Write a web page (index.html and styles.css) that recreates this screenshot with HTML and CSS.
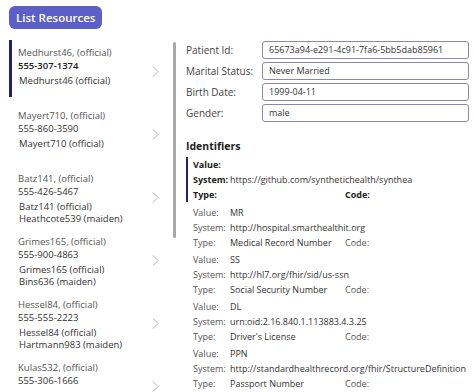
FILE: index.html
```html
<!DOCTYPE html>
<html lang="en">
<head>
    <meta charset="UTF-8">
    <title>Patients</title>
    <link rel="stylesheet" href="styles.css">
</head>
<body>
    <div class="app">
        <button class="list-btn">List Resources</button>

        <div class="main">
            <div class="list">
                <div class="item selected">
                    <div class="item-text">
                        <div class="name">Medhurst46, (official)</div>
                        <div class="phone strong">555-307-1374</div>
                        <div class="names">Medhurst46 (official)</div>
                    </div>
                    <svg class="chev" width="7" height="11" viewBox="0 0 7 11"><polyline points="1,0.5 6,5.5 1,10.5"/></svg>
                </div>
                <div class="item">
                    <div class="item-text">
                        <div class="name">Mayert710, (official)</div>
                        <div class="phone">555-860-3590</div>
                        <div class="names">Mayert710 (official)</div>
                    </div>
                    <svg class="chev" width="7" height="11" viewBox="0 0 7 11"><polyline points="1,0.5 6,5.5 1,10.5"/></svg>
                </div>
                <div class="item">
                    <div class="item-text">
                        <div class="name">Batz141, (official)</div>
                        <div class="phone">555-426-5467</div>
                        <div class="names">Batz141 (official)<br>Heathcote539 (maiden)</div>
                    </div>
                    <svg class="chev" width="7" height="11" viewBox="0 0 7 11"><polyline points="1,0.5 6,5.5 1,10.5"/></svg>
                </div>
                <div class="item">
                    <div class="item-text">
                        <div class="name">Grimes165, (official)</div>
                        <div class="phone">555-900-4863</div>
                        <div class="names">Grimes165 (official)<br>Bins636 (maiden)</div>
                    </div>
                    <svg class="chev" width="7" height="11" viewBox="0 0 7 11"><polyline points="1,0.5 6,5.5 1,10.5"/></svg>
                </div>
                <div class="item">
                    <div class="item-text">
                        <div class="name">Hessel84, (official)</div>
                        <div class="phone">555-555-2223</div>
                        <div class="names">Hessel84 (official)<br>Hartmann983 (maiden)</div>
                    </div>
                    <svg class="chev" width="7" height="11" viewBox="0 0 7 11"><polyline points="1,0.5 6,5.5 1,10.5"/></svg>
                </div>
                <div class="item">
                    <div class="item-text">
                        <div class="name">Kulas532, (official)</div>
                        <div class="phone">555-306-1666</div>
                    </div>
                    <svg class="chev" width="7" height="11" viewBox="0 0 7 11"><polyline points="1,0.5 6,5.5 1,10.5"/></svg>
                </div>
            </div>

            <div class="scrollbar"></div>

            <div class="detail">
                <div class="fields">
                    <label>Patient Id:</label>
                    <div class="input">65673a94-e291-4c91-7fa6-5bb5dab85961</div>
                    <label>Marital Status:</label>
                    <div class="input">Never Married</div>
                    <label>Birth Date:</label>
                    <div class="input">1999-04-11</div>
                    <label>Gender:</label>
                    <div class="input">male</div>
                </div>

                <h2>Identifiers</h2>

                <div class="ident first">
                    <span class="k">Value:</span><span class="v"></span><span></span><span></span>
                    <span class="k">System:</span><span class="v wide">https://github.com/synthetichealth/synthea</span>
                    <span class="k">Type:</span><span class="v"></span><span class="k">Code:</span><span></span>
                </div>
                <div class="ident">
                    <span class="k">Value:</span><span class="v">MR</span><span></span><span></span>
                    <span class="k">System:</span><span class="v wide">http://hospital.smarthealthit.org</span>
                    <span class="k">Type:</span><span class="v">Medical Record Number</span><span class="k">Code:</span><span></span>
                </div>
                <div class="ident">
                    <span class="k">Value:</span><span class="v">SS</span><span></span><span></span>
                    <span class="k">System:</span><span class="v wide">http://hl7.org/fhir/sid/us-ssn</span>
                    <span class="k">Type:</span><span class="v">Social Security Number</span><span class="k">Code:</span><span></span>
                </div>
                <div class="ident">
                    <span class="k">Value:</span><span class="v">DL</span><span></span><span></span>
                    <span class="k">System:</span><span class="v wide">urn:oid:2.16.840.1.113883.4.3.25</span>
                    <span class="k">Type:</span><span class="v">Driver's License</span><span class="k">Code:</span><span></span>
                </div>
                <div class="ident">
                    <span class="k">Value:</span><span class="v">PPN</span><span></span><span></span>
                    <span class="k">System:</span><span class="v wide">http://standardhealthrecord.org/fhir/StructureDefinition</span>
                    <span class="k">Type:</span><span class="v">Passport Number</span><span class="k">Code:</span><span></span>
                </div>
            </div>
        </div>
    </div>
</body>
</html>
```

FILE: styles.css
```css
body {
    margin: 0;
    font-family: "Open Sans", "Noto Sans", sans-serif;
    font-size: 9.5px;
    color: #333;
    background: #fff;
    overflow: hidden;
}
.app {
    padding: 6px 0 0 9px;
}
.list-btn {
    display: block;
    height: 23px;
    padding: 0 7px;
    border: none;
    border-radius: 6px;
    background: #5b5fc7;
    color: #fff;
    font-family: inherit;
    font-size: 11.5px;
    font-weight: 600;
}
.main {
    display: flex;
    margin-top: 11px;
}
.list {
    width: 164px;
    flex: none;
}
.item {
    display: flex;
    height: 57px;
    margin-bottom: 6px;
    padding-left: 6px;
    border-left: 3px solid transparent;
}
.item.selected {
    border-left-color: #22226a;
}
.item-text {
    flex: 1;
    padding-top: 7px;
    line-height: 12.5px;
}
.name {
    color: #555;
}
.phone.strong {
    color: #222;
    font-weight: 600;
}
.names {
    margin-top: 3px;
    padding-left: 1px;
    line-height: 12px;
    color: #333;
}
.chev {
    align-self: center;
    margin-top: 6px;
    margin-right: 14px;
}
.chev polyline {
    fill: none;
    stroke: #b0b0b0;
    stroke-width: 1;
}
.scrollbar {
    flex: none;
    width: 3px;
    height: 196px;
    margin-top: 2px;
    border-radius: 2px;
    background: #a8a8a8;
}
.detail {
    flex: 1;
    padding-left: 10px;
    padding-right: 5px;
}
.fields {
    display: grid;
    grid-template-columns: 76px 1fr;
    row-gap: 3px;
    align-items: center;
    margin-top: 1px;
}
.fields label {
    font-size: 10px;
    color: #444;
}
.input {
    height: 18px;
    box-sizing: border-box;
    padding: 0 6px;
    border: 1.5px solid #8b87b5;
    border-radius: 3px;
    font-size: 9px;
    line-height: 15px;
    color: #333;
}
h2 {
    margin: 16px 0 3px;
    font-size: 10.5px;
    font-weight: 700;
    color: #222;
    line-height: 16px;
}
.ident {
    display: grid;
    grid-template-columns: 37px 115px auto 1fr;
    font-size: 9px;
    line-height: 15px;
    padding-left: 7px;
    margin-bottom: 2px;
}
.ident .wide {
    grid-column: span 3;
    white-space: nowrap;
}
.ident .k {
    color: #555;
}
.ident .v {
    color: #333;
}
.ident.first {
    padding-left: 5px;
    border-left: 2px solid #22226a;
    margin-bottom: 3px;
}
.ident.first .k {
    font-weight: 700;
    color: #222;
}
```
